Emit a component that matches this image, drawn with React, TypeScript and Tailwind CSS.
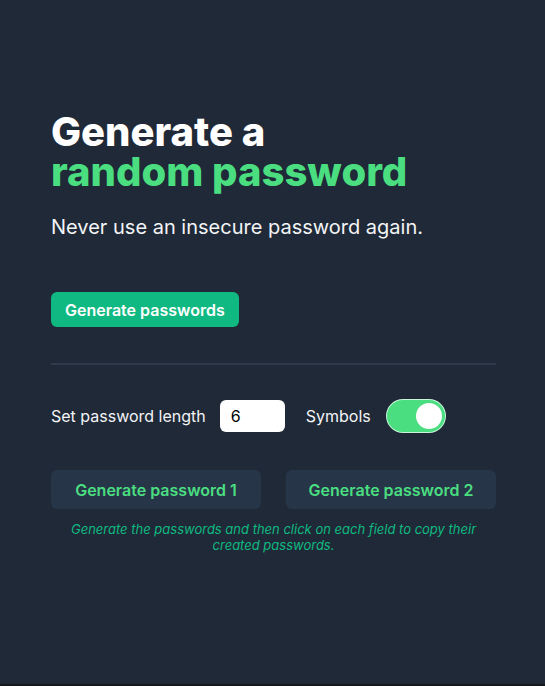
import React, { useState } from "react";

export default function App() {
  const [on, setOn] = useState(true);
  return (
    <div className="w-[545px] h-[686px] bg-[#16181c]" style={{ fontFamily: "Inter, 'Noto Sans', sans-serif" }}>
      <div className="h-[684px] bg-[#1F2937] pl-[51px] pr-[49px] pt-[112px]">
        <h1 className="text-[40px] leading-[40px] font-extrabold tracking-[0px] text-white">
          <span className="block">Generate a</span>
          <span className="block text-[#4ADE80]">random password</span>
        </h1>
        <p className="mt-[21px] text-[20px] leading-[28px] text-[#F3F4F6]">Never use an insecure password again.</p>
        <button className="mt-[51px] h-[35px] px-[14px] rounded-md bg-[#10B981] text-white text-[16px] font-semibold">
          Generate passwords
        </button>
        <div className="mt-[36px] h-[2px] w-[445px] bg-[#2F3A4A]" />
        <div className="mt-[34px] flex items-center h-[34px]">
          <span className="text-[16px] text-[#F3F4F6]">Set password length</span>
          <div className="ml-[14px] w-[65px] h-[32px] rounded-md bg-white flex items-center pl-[11px] text-[16px] text-black">6</div>
          <span className="ml-[21px] text-[16px] text-[#F3F4F6]">Symbols</span>
          <button
            onClick={() => setOn(!on)}
            className="ml-[15px] w-[60px] h-[34px] rounded-full bg-[#4ADE80] border-[1.5px] border-white/70 flex items-center justify-end pr-[3px]"
          >
            <span className="w-[26px] h-[26px] rounded-full bg-white block" />
          </button>
        </div>
        <div className="mt-[37px] flex gap-[25px]">
          <button className="w-[210px] shrink-0 h-[39px] rounded-md bg-[#273549] text-[#4ADE80] text-[16px] font-semibold">
            Generate password 1
          </button>
          <button className="w-[210px] shrink-0 h-[39px] rounded-md bg-[#273549] text-[#4ADE80] text-[16px] font-semibold">
            Generate password 2
          </button>
        </div>
        <p className="mt-[12px] w-[445px] text-center italic text-[13px] leading-[16px] text-[#10B981]">
          Generate the passwords and then click on each field to copy their created passwords.
        </p>
      </div>
    </div>
  );
}
